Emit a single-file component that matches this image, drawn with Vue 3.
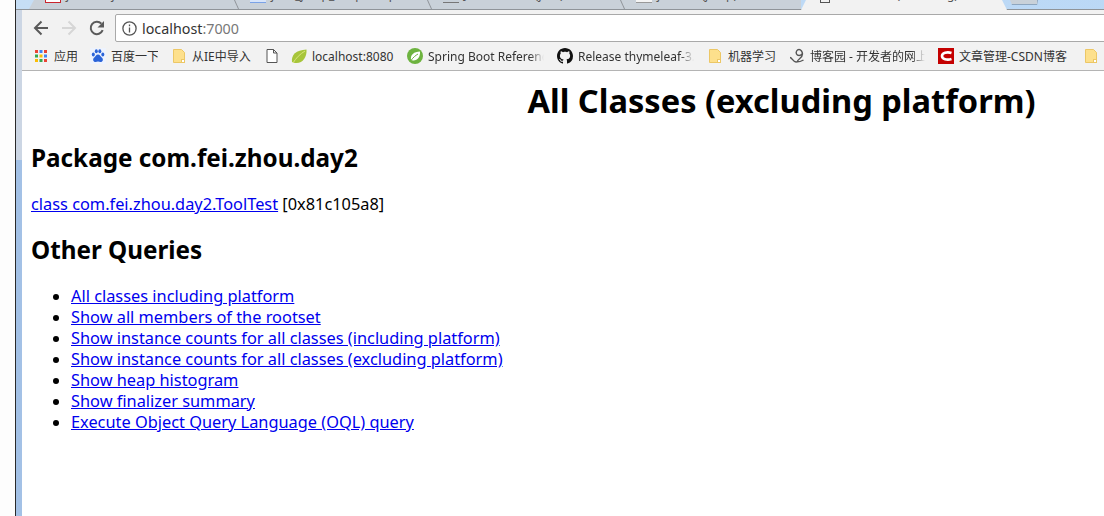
<template>
  <div class="desktop">
    <div class="window">
      <div class="tab-strip">
        <div v-for="tab in tabs" :key="tab.text" class="tab" :class="tab.kind" :style="{ width: tab.width + 'px' }">
          <span class="tab-icon" :class="tab.icon"></span>
          <span class="tab-text">{{ tab.text }}</span>
        </div>
        <div class="new-tab"></div>
      </div>
      <div class="toolbar">
        <svg width="18" height="18" viewBox="0 0 18 18" fill="none" stroke="#5a5a5a" stroke-width="2"><path d="M16 9H3.500M9.500 2.500L3 9l6.500 6.500"/></svg>
        <svg width="18" height="18" viewBox="0 0 18 18" fill="none" stroke="#d6d6d6" stroke-width="2"><path d="M2 9h12.500M8.500 2.500L15 9l-6.500 6.500"/></svg>
        <svg width="18" height="18" viewBox="0 0 18 18" fill="none" stroke="#5a5a5a" stroke-width="2"><path d="M14.700 11.200A6.200 6.200 0 1 1 13.400 4.600"/><path d="M16 2v6.500H9.500z" fill="#5a5a5a" stroke="none"/></svg>
        <div class="omnibox">
          <svg width="15" height="15" viewBox="0 0 15 15" fill="none" stroke="#555" stroke-width="1.300"><circle cx="7.500" cy="7.500" r="6.600"/><path d="M7.500 6.500V11.500M7.500 3.500V5.200"/></svg>
          <span class="url">localhost<span class="port">:7000</span></span>
        </div>
      </div>
      <div class="bookmarks">
        <div v-for="b in bookmarks" :key="b.start" class="bookmark" :style="{ width: b.width + 'px' }">
          <svg class="bm-icon" width="16" height="16" viewBox="0 0 16 16">
            <template v-if="b.icon === 'apps'">
              <rect v-for="d in appDots" :key="d.x + '-' + d.y" :x="d.x" :y="d.y" width="3" height="3" :fill="d.fill" />
            </template>
            <template v-else-if="b.icon === 'baidu'">
              <rect width="16" height="16" fill="#eef3fd" />
              <g fill="#2a63d8">
                <ellipse cx="3.300" cy="6.500" rx="1.500" ry="2" />
                <ellipse cx="6.300" cy="3.300" rx="1.500" ry="2" />
                <ellipse cx="9.800" cy="3.300" rx="1.500" ry="2" />
                <ellipse cx="12.800" cy="6.500" rx="1.500" ry="2" />
                <path d="M8 6.500c-2 0-2.500 2-4 3.200-1.500 1.300-1 4.300 1.500 4.300 1 0 1.700-.4 2.500-.4s1.500.4 2.500.4c2.500 0 3-3 1.500-4.300C10.500 8.500 10 6.500 8 6.500z" />
              </g>
            </template>
            <template v-else-if="b.icon === 'folder'">
              <path d="M2.500 1.500h8l3 3v10h-11z" fill="#fde08c" stroke="#ecc766" />
              <rect x="10.500" y="11.500" width="3" height="3" fill="#fff" stroke="#ecc766" />
            </template>
            <template v-else-if="b.icon === 'file'">
              <path d="M3 1.500h6.500l3.500 3.500v9.500H3zM9.500 1.500V5H13" fill="#fff" stroke="#555" />
            </template>
            <template v-else-if="b.icon === 'leaf'">
              <path d="M1 14C0 7 5 2 15.500 1.500 16 9 12 15 5.500 15c-2 0-3.500-.5-4.500-1z" fill="#a7c53a" />
              <path d="M2 15C5 10 9 6 14 3" fill="none" stroke="#d9e67c" />
            </template>
            <template v-else-if="b.icon === 'spring'">
              <circle cx="8" cy="8" r="8" fill="#6db33f" />
              <path d="M4 12C3 7 7 3.500 13 3.500 13.500 9 10 13 6 12.500" fill="#fff" />
              <path d="M4 12.500C6 9.500 8.500 7.500 11 6" fill="none" stroke="#6db33f" />
            </template>
            <template v-else-if="b.icon === 'github'">
              <path fill="#111" d="M8 0C3.580 0 0 3.580 0 8c0 3.540 2.290 6.530 5.470 7.590.4.070.55-.17.55-.38 0-.19-.01-.82-.01-1.490-2.010.37-2.530-.49-2.690-.94-.09-.23-.48-.94-.82-1.130-.28-.15-.68-.52-.01-.53.63-.01 1.080.58 1.230.82.72 1.210 1.870.87 2.330.66.070-.52.28-.87.51-1.070-1.780-.2-3.640-.89-3.640-3.950 0-.87.31-1.590.82-2.150-.08-.2-.36-1.020.08-2.120 0 0 .67-.21 2.200.82.64-.18 1.320-.27 2-.27.68 0 1.360.09 2 .27 1.530-1.040 2.200-.82 2.200-.82.44 1.100.16 1.920.08 2.120.51.56.82 1.270.82 2.150 0 3.070-1.870 3.750-3.650 3.950.29.25.54.73.54 1.480 0 1.070-.01 1.930-.01 2.200 0 .21.15.46.55.38A8.013 8.013 0 0016 8c0-4.420-3.580-8-8-8z" />
            </template>
            <template v-else-if="b.icon === 'cnblogs'">
              <path d="M1 9.500c2 0 3 4.500 6 4.500s6-1 7.500-2M8.500 14c-1-3 5-3 5-8 0-2-1.500-4.500-3.500-4.500S6.500 4 7.500 6s4 2 5.500 0" fill="none" stroke="#555" stroke-width="1.400" />
            </template>
            <template v-else-if="b.icon === 'csdn'">
              <rect width="16" height="16" fill="#c40000" />
              <path d="M13.500 5C9 3.500 4 5 4 8s5 4.500 9.500 3" fill="none" stroke="#fff" stroke-width="2.600" />
            </template>
          </svg>
          <span class="bm-text" :class="{ fade: b.fade }">{{ b.text }}</span>
        </div>
      </div>
      <main class="page">
        <h1>All Classes (excluding platform)</h1>
        <h2>Package com.fei.zhou.day2</h2>
        <p><a href="#">class com.fei.zhou.day2.ToolTest</a> [0x81c105a8]</p>
        <h2>Other Queries</h2>
        <ul>
          <li v-for="q in queries" :key="q"><a href="#">{{ q }}</a></li>
        </ul>
      </main>
    </div>
  </div>
</template>

<script setup>
const tabs = [
  { text: 'jhat分析java堆内存', width: 205, kind: 'first', icon: 'red' },
  { text: 'jstat_jmap_heapdump', width: 193, icon: 'blue' },
  { text: 'Java内存分析(jhat)', width: 193, icon: 'grey' },
  { text: 'jvm工具(jmap)分析', width: 181, icon: 'doc' },
  { text: 'All Classes (excluding)', width: 206, kind: 'active', icon: 'page-box' }
]

const bookmarks = [
  { start: 33, text: '应用', width: 57, icon: 'apps' },
  { start: 90, text: '百度一下', width: 81, icon: 'baidu' },
  { start: 171, text: '从IE中导入', width: 93, icon: 'folder' },
  { start: 264, text: '', width: 27, icon: 'file' },
  { start: 291, text: 'localhost:8080', width: 116, icon: 'leaf' },
  { start: 407, text: 'Spring Boot Reference Guide', width: 150, icon: 'spring', fade: true },
  { start: 557, text: 'Release thymeleaf-3.0.0', width: 150, icon: 'github', fade: true },
  { start: 707, text: '机器学习', width: 82, icon: 'folder' },
  { start: 789, text: '博客园 - 开发者的网上家园', width: 149, icon: 'cnblogs', fade: true },
  { start: 938, text: '文章管理-CSDN博客', width: 145, icon: 'csdn' },
  { start: 1083, text: '', width: 21, icon: 'folder' }
]

const dotColors = ['#ea4335', '#4285f4', '#ea4335', '#34a853', '#fbbc05', '#4285f4', '#fbbc05', '#34a853', '#ea4335']
const appDots = dotColors.map((fill, i) => ({ fill, x: 2 + (i % 3) * 4.500, y: 2 + Math.floor(i / 3) * 4.500 }))

const queries = [
  'All classes including platform',
  'Show all members of the rootset',
  'Show instance counts for all classes (including platform)',
  'Show instance counts for all classes (excluding platform)',
  'Show heap histogram',
  'Show finalizer summary',
  'Execute Object Query Language (OQL) query'
]
</script>

<style>
html, body { margin: 0; background: #fff; overflow: hidden; }
</style>

<style scoped>
.desktop {
  height: 516px;
  width: 1104px;
  overflow: hidden;
  padding-left: 15px;
  box-sizing: border-box;
  background: #fdfdfd;
  font-family: "Noto Sans", "Noto Sans CJK SC", sans-serif;
}
.window {
  height: 100%;
  width: 1517px;
  box-sizing: border-box;
  border-left: 1px solid #2a2a2a;
  background: linear-gradient(#ccd6e4 160px, #a3c1e6 160px);
  padding-left: 6px;
}
.tab-strip {
  height: 9px;
  display: flex;
  margin-left: -6px;
  padding-left: 13px;
  background: linear-gradient(90deg, #c6def5, #b7d6f6);
  border-bottom: 1px solid #8f9499;
}
.tab {
  position: relative;
  height: 9px;
  flex: none;
  display: flex;
  gap: 5px;
  padding-left: 16px;
  box-sizing: border-box;
  background: #c9d1d9;
  color: #555;
  font-size: 12px;
  overflow: hidden;
}
.tab::before {
  content: "";
  position: absolute;
  left: 2px;
  top: -1px;
  width: 1px;
  height: 11px;
  background: #8f9499;
  transform: skewX(24deg);
}
.tab.first { clip-path: polygon(5px 0, 100% 0, 100% 100%, 0 100%); }
.tab.first::before { display: none; }
.tab.active {
  height: 10px;
  background: #f2f2f2;
  z-index: 1;
  clip-path: polygon(5px 0, calc(100% - 5px) 0, 100% 100%, 0 100%);
  padding-left: 19px;
}
.tab.active::before { display: none; }
.tab-icon { width: 16px; height: 3px; flex: none; }
.tab-icon.red { background: linear-gradient(#fff 2px, #c9252d 2px); border: 1px solid #c9252d; border-top: 0; box-sizing: border-box; }
.tab-icon.blue { background: #d6e4fa; border-bottom: 1px solid #7aa2e6; box-sizing: border-box; }
.tab-icon.grey { background: transparent; border-bottom: 1px solid #777; box-sizing: border-box; }
.tab-icon.doc { background: #f4f4f4; border-bottom: 1px solid #999; box-sizing: border-box; }
.tab-icon.page-box { width: 10px; border: 1px solid #555; border-top: 0; box-sizing: border-box; }
.tab-text { margin-top: -13px; line-height: 16px; white-space: nowrap; }
.new-tab {
  width: 28px;
  height: 5px;
  background: #c9d1d9;
  margin-left: 3px;
  border-right: 1px solid #8ea6bf;
  border-bottom: 1px solid #8ea6bf;
  box-sizing: border-box;
  clip-path: polygon(0 0, 100% 0, calc(100% - 1px) 100%, 2px 100%);
}
.toolbar {
  height: 32px;
  padding: 4px 0 0 10px;
  background: #f2f2f2;
  display: flex;
  align-items: center;
  gap: 10px;
  box-sizing: border-box;
}
.omnibox {
  flex: 1;
  height: 28px;
  margin-left: -1px;
  background: #fff;
  border: 1px solid #a9a9a9;
  border-radius: 2px 0 0 2px;
  box-sizing: border-box;
  display: flex;
  align-items: center;
  gap: 5px;
  padding-left: 6px;
}
.url { font-size: 14.300px; color: #333; }
.port { color: #777; }
.bookmarks {
  height: 29px;
  background: #f2f2f2;
  border-bottom: 1px solid #b4b4b4;
  box-sizing: border-box;
  display: flex;
  align-items: center;
  padding-left: 11px;
  overflow: hidden;
}
.bookmark { flex: none; display: flex; align-items: center; gap: 5px; box-sizing: border-box; padding-right: 13px; }
.bm-icon { flex: none; }
.bm-text { flex: 1; min-width: 0; overflow: hidden; font-size: 12px; color: #333; white-space: nowrap; }
.bm-text.fade { mask-image: linear-gradient(90deg, #000 88%, transparent); }
.page {
  background: #fff;
  height: 100%;
  padding-left: 9px;
  color: #000;
  font-size: 16.350px;
  line-height: 21px;
}
h1 {
  margin: 0;
  padding-top: 7px;
  font-size: 32.600px;
  line-height: 46px;
  font-weight: 700;
  text-align: center;
}
h2 { margin: 19px 0 0; font-size: 24.250px; line-height: 32px; font-weight: 700; }
h1 + h2 { margin-top: 18px; }
p { margin: 20px 0 0; }
a { color: #00e; }
ul { margin: 20px 0 0; padding-left: 40px; }
li { height: 21px; }
</style>
